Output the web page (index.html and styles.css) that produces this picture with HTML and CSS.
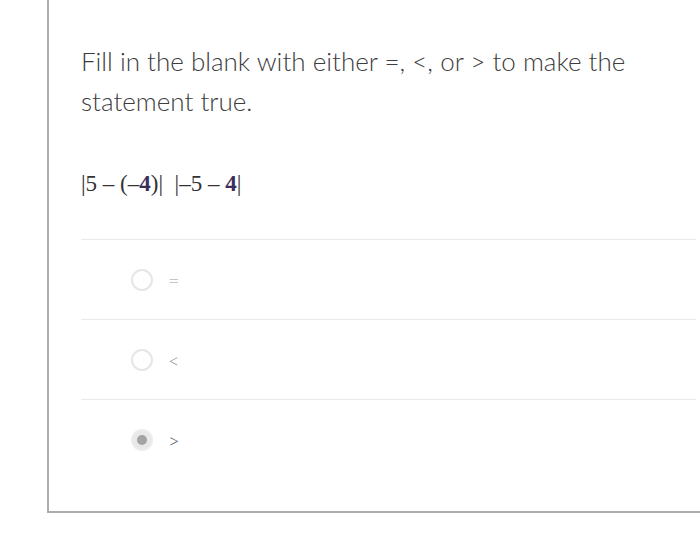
FILE: index.html
```
<!DOCTYPE html>
<html>
<head>
<meta charset="utf-8">
<link rel="stylesheet" href="styles.css">
</head>
<body>
<div class="card">
  <div class="content">
    <p class="prompt">Fill in the blank with either =, &lt;, or &gt; to make the statement true.</p>
    <p class="math">|5 – (–<span class="num">4</span>)| &nbsp;|–5 – <span class="num">4</span>|</p>
    <div class="options">
      <div class="option"><span class="radio"></span><span class="label">=</span></div>
      <div class="option"><span class="radio"></span><span class="label">&lt;</span></div>
      <div class="option"><span class="radio checked"></span><span class="label dark">&gt;</span></div>
    </div>
  </div>
</div>
</body>
</html>
```
FILE: styles.css
```
html, body {
  margin: 0;
  padding: 0;
  background: #fff;
  overflow: hidden;
}
body {
  width: 700px;
  height: 555px;
}
.card {
  margin-left: 47px;
  width: 653px;
  height: 513px;
  border-left: 2px solid #acacac;
  border-bottom: 2px solid #acacac;
  box-sizing: border-box;
}
.content {
  padding-left: 32px;
  width: 615px;
  padding-top: 41px;
}
.prompt {
  margin: 0;
  font-family: Lato, "Liberation Sans", sans-serif;
  font-weight: 300;
  font-size: 26px;
  line-height: 40px;
  color: #3d3d3d;
  width: 610px;
}
.math {
  margin: 48px 0 0 0;
  font-family: "Liberation Serif", serif;
  font-size: 23px;
  line-height: 30px;
  color: #333;
  white-space: pre;
}
.num {
  color: #3b2d5c;
  font-weight: bold;
}
.options {
  margin-top: 40px;
}
.option {
  border-top: 1px solid #e9e9e9;
  height: 79px;
  display: flex;
  align-items: center;
}
.radio {
  margin-left: 50px;
  width: 22px;
  height: 22px;
  border: 2px solid #e6e6e6;
  border-radius: 50%;
  box-sizing: border-box;
  display: flex;
  align-items: center;
  justify-content: center;
}
.radio.checked {
  background: #e8e8e8;
  border-color: #ececec;
}
.radio.checked::after {
  content: "";
  width: 10px;
  height: 10px;
  border-radius: 50%;
  background: #a3a3a3;
}
.label {
  margin-left: 15px;
  font-family: Lato, "Liberation Sans", sans-serif;
  font-weight: 300;
  font-size: 20px;
  color: #999;
}
.label.dark {
  color: #555;
}
```
